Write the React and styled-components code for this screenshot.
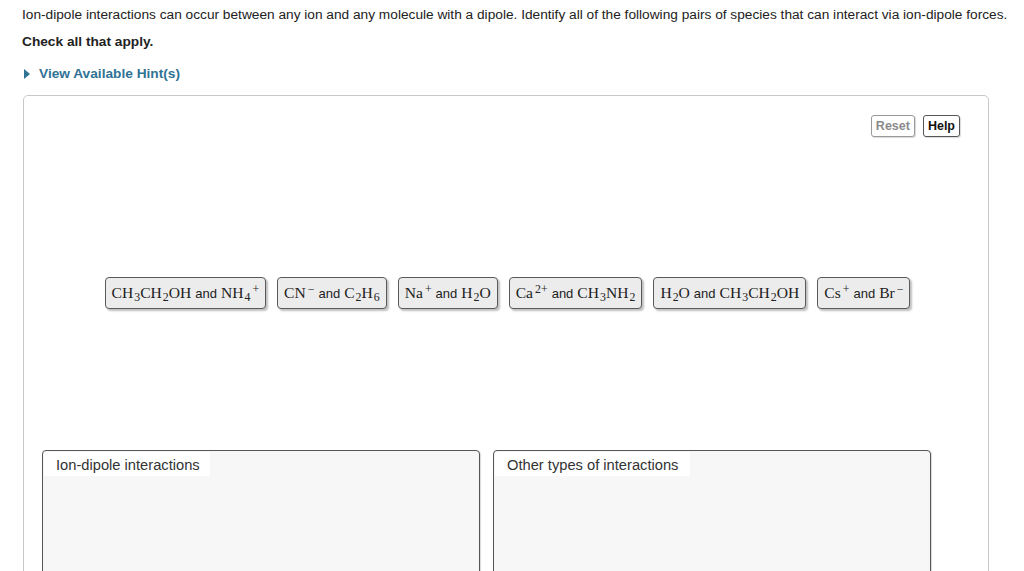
import React from "react";
import styled, { createGlobalStyle } from "styled-components";

const Global = createGlobalStyle`
  html, body { margin: 0; padding: 0; background: #fff; }
  body { font-family: "Liberation Sans", Arial, sans-serif; color: #222; }
`;

const Page = styled.div`
  padding: 7px 0 0 22px;
  width: 1024px;
  box-sizing: border-box;
  height: 571px;
  overflow: hidden;
`;

const Prompt = styled.p`
  margin: 0;
  font-size: 13.7px;
  line-height: 16px;
  color: #222;
  white-space: nowrap;
`;

const Instruction = styled.p`
  margin: 11px 0 0;
  font-size: 13.7px;
  line-height: 16px;
  font-weight: bold;
  color: #222;
`;

const HintRow = styled.div`
  margin-top: 16px;
  display: flex;
  align-items: center;
  gap: 9px;
  padding-left: 2px;
  font-size: 13.7px;
  line-height: 16px;
  font-weight: bold;
  color: #2f7395;
`;

const Caret = styled.span`
  width: 0;
  height: 0;
  border-top: 5px solid transparent;
  border-bottom: 5px solid transparent;
  border-left: 6px solid #2f7395;
`;

const Panel = styled.div`
  margin-top: 13px;
  margin-left: 1px;
  width: 966px;
  height: 520px;
  box-sizing: border-box;
  border: 1px solid #c8c8c8;
  border-radius: 5px;
  display: flex;
  flex-direction: column;
`;

const Toolbar = styled.div`
  display: flex;
  justify-content: flex-end;
  gap: 8px;
  padding: 19px 28px 0 0;
`;

const ToolButton = styled.button`
  font-family: "Liberation Sans", Arial, sans-serif;
  font-size: 12.5px;
  font-weight: bold;
  height: 22px;
  padding: 0 4px;
  background: #fff;
  border: 1px solid ${(p) => (p.$muted ? "#9a9a9a" : "#555")};
  border-radius: 3px;
  color: ${(p) => (p.$muted ? "#8a8a8a" : "#111")};
  box-shadow: 1px 1px 1px rgba(0,0,0,0.15);
`;

const ChipRow = styled.div`
  margin-top: 140px;
  display: flex;
  justify-content: center;
  gap: 11px;
  padding-left: 3px;
`;

const Chip = styled.div`
  height: 32px;
  box-sizing: border-box;
  padding: 0 6px;
  display: flex;
  align-items: center;
  background: #ececec;
  border: 1.5px solid #5a5a5a;
  border-radius: 4px;
  box-shadow: 2px 2px 2px rgba(0,0,0,0.25);
  color: #222;
  white-space: nowrap;
`;

const M = styled.span`
  font-family: "Liberation Serif", "Times New Roman", serif;
  font-size: 15.6px;
  sub, sup { font-size: 76%; line-height: 0; }
  sub { vertical-align: -3px; margin-left: 1px; }
  sup { vertical-align: 5px; margin-left: 2px; }
`;

const And = styled.span`
  font-family: "Liberation Sans", Arial, sans-serif;
  font-size: 13px;
  margin: 0 4px;
`;

const Zones = styled.div`
  margin-top: 141px;
  display: flex;
  gap: 13px;
  padding-left: 18px;
`;

const Zone = styled.div`
  width: 438px;
  height: 200px;
  box-sizing: border-box;
  border: 1.5px solid #555;
  border-radius: 4px;
  background: #f7f7f7;
  box-shadow: 1px 1px 1px rgba(0,0,0,0.15);
`;

const ZoneLabel = styled.div`
  display: inline-block;
  background: #fff;
  margin: 1px 0 0 1px;
  padding: 5px 10px 3px 12px;
  width: ${(p) => p.$w}px;
  box-sizing: border-box;
  font-size: 14.7px;
  line-height: 16px;
  color: #333;
`;

const chips = [
  <><M>CH<sub>3</sub>CH<sub>2</sub>OH</M><And>and</And><M>NH<sub>4</sub><sup>+</sup></M></>,
  <><M>CN<sup>−</sup></M><And>and</And><M>C<sub>2</sub>H<sub>6</sub></M></>,
  <><M>Na<sup>+</sup></M><And>and</And><M>H<sub>2</sub>O</M></>,
  <><M>Ca<sup>2+</sup></M><And>and</And><M>CH<sub>3</sub>NH<sub>2</sub></M></>,
  <><M>H<sub>2</sub>O</M><And>and</And><M>CH<sub>3</sub>CH<sub>2</sub>OH</M></>,
  <><M>Cs<sup>+</sup></M><And>and</And><M>Br<sup>−</sup></M></>,
];

export default function App() {
  return (
    <>
      <Global />
      <Page>
        <Prompt>
          Ion-dipole interactions can occur between any ion and any molecule with a dipole. Identify all of the following pairs of species that can interact via ion-dipole forces.
        </Prompt>
        <Instruction>Check all that apply.</Instruction>
        <HintRow>
          <Caret />
          View Available Hint(s)
        </HintRow>
        <Panel>
          <Toolbar>
            <ToolButton $muted>Reset</ToolButton>
            <ToolButton>Help</ToolButton>
          </Toolbar>
          <ChipRow>
            {chips.map((c, i) => (
              <Chip key={i}>{c}</Chip>
            ))}
          </ChipRow>
          <Zones>
            <Zone>
              <ZoneLabel $w={166}>Ion-dipole interactions</ZoneLabel>
            </Zone>
            <Zone>
              <ZoneLabel $w={195}>Other types of interactions</ZoneLabel>
            </Zone>
          </Zones>
        </Panel>
      </Page>
    </>
  );
}
